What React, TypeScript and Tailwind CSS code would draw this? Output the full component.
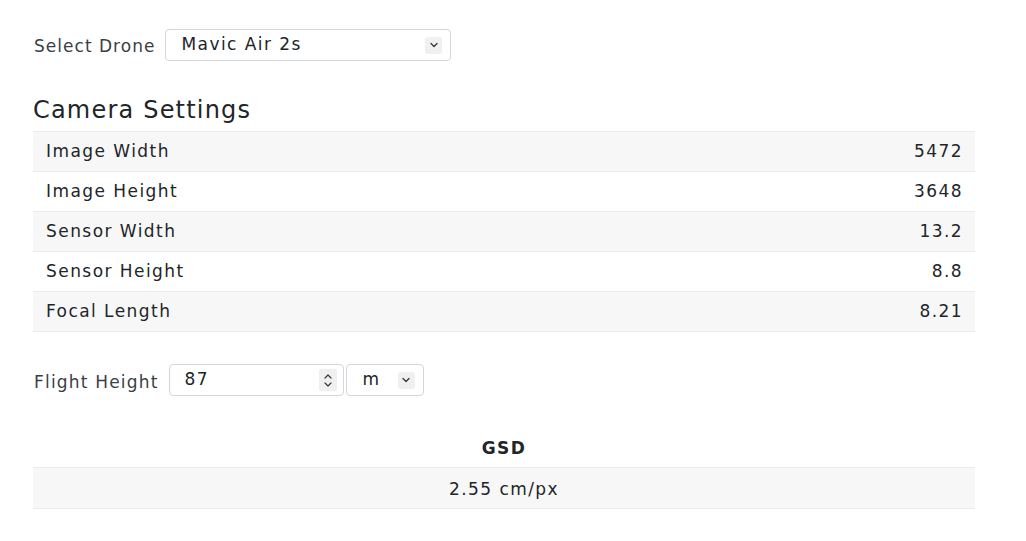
import React from "react";

const rows: [string, string][] = [
  ["Image Width", "5472"],
  ["Image Height", "3648"],
  ["Sensor Width", "13.2"],
  ["Sensor Height", "8.8"],
  ["Focal Length", "8.21"],
];

function Chevron() {
  return (
    <svg width="8" height="6" viewBox="0 0 8 6" fill="none">
      <path d="M1 1.5 L4 4.5 L7 1.5" stroke="#343a40" strokeWidth="1.3" strokeLinecap="round" strokeLinejoin="round" />
    </svg>
  );
}

export default function App() {
  return (
    <div className="min-h-screen bg-white text-[#212529]">
      <div className="w-[942px] ml-[33px] pt-[29px] font-['DejaVu_Sans',sans-serif] tracking-[0.09em]">
        <div className="flex items-center h-[32px]">
          <span className="text-[17px] text-[#3a3f44] ml-[1px] mr-[10px] mt-[4px] tracking-[0.06em]">Select Drone</span>
          <div className="w-[286px] h-[32px] border border-[#d3d6da] rounded-[4px] flex items-center pl-[15px] pr-[8px]">
            <span className="flex-1 text-[17px] mt-[-1px]">Mavic Air 2s</span>
            <span className="w-[17px] h-[17px] rounded-[3px] bg-[#f0f0f0] flex items-center justify-center">
              <Chevron />
            </span>
          </div>
        </div>

        <h2 className="text-[24px] mt-[28px] leading-[40px] h-[42px] pt-[1px] tracking-[0.05em]">Camera Settings</h2>

        <div className="border-t border-[#e9ecef]">
          {rows.map(([k, v], i) => (
            <div
              key={k}
              className={`flex items-center justify-between h-[40px] border-b border-[#e9ecef] px-[13px] text-[17px] ${i % 2 === 0 ? "bg-[#f7f7f7]" : "bg-white"}`}
            >
              <span>{k}</span>
              <span className="mr-[-1px]">{v}</span>
            </div>
          ))}
        </div>

        <div className="flex items-center h-[32px] mt-[32px]">
          <span className="text-[17px] text-[#3a3f44] ml-[1px] mr-[10px] mt-[5px] tracking-[0.07em]">Flight Height</span>
          <div className="w-[175px] h-[32px] border border-[#d3d6da] rounded-[4px] flex items-center pl-[15px] pr-[6px]">
            <span className="flex-1 text-[17px] mt-[-1px]">87</span>
            <span className="w-[18px] h-[22px] bg-[#f0f0f0] rounded-[2px] flex flex-col items-center justify-center gap-[3px]">
              <svg width="8" height="5" viewBox="0 0 8 5" fill="none">
                <path d="M1 4 L4 1 L7 4" stroke="#343a40" strokeWidth="1.2" strokeLinecap="round" strokeLinejoin="round" />
              </svg>
              <svg width="8" height="5" viewBox="0 0 8 5" fill="none">
                <path d="M1 1 L4 4 L7 1" stroke="#343a40" strokeWidth="1.2" strokeLinecap="round" strokeLinejoin="round" />
              </svg>
            </span>
          </div>
          <div className="ml-[2px] w-[78px] h-[32px] border border-[#d3d6da] rounded-[4px] flex items-center pl-[16px] pr-[8px]">
            <span className="flex-1 text-[17px] mt-[-1px]">m</span>
            <span className="w-[17px] h-[17px] rounded-[3px] bg-[#f0f0f0] flex items-center justify-center">
              <Chevron />
            </span>
          </div>
        </div>

        <div className="mt-[34px]">
          <div className="h-[38px] flex items-center justify-center font-bold text-[17px] border-b border-[#e9ecef] pt-[1px]">GSD</div>
          <div className="h-[41px] flex items-center justify-center bg-[#f7f7f7] text-[17px] border-b border-[#e9ecef]">
            <span className="mt-[3px]">2.55 cm/px</span>
          </div>
        </div>
      </div>
    </div>
  );
}
